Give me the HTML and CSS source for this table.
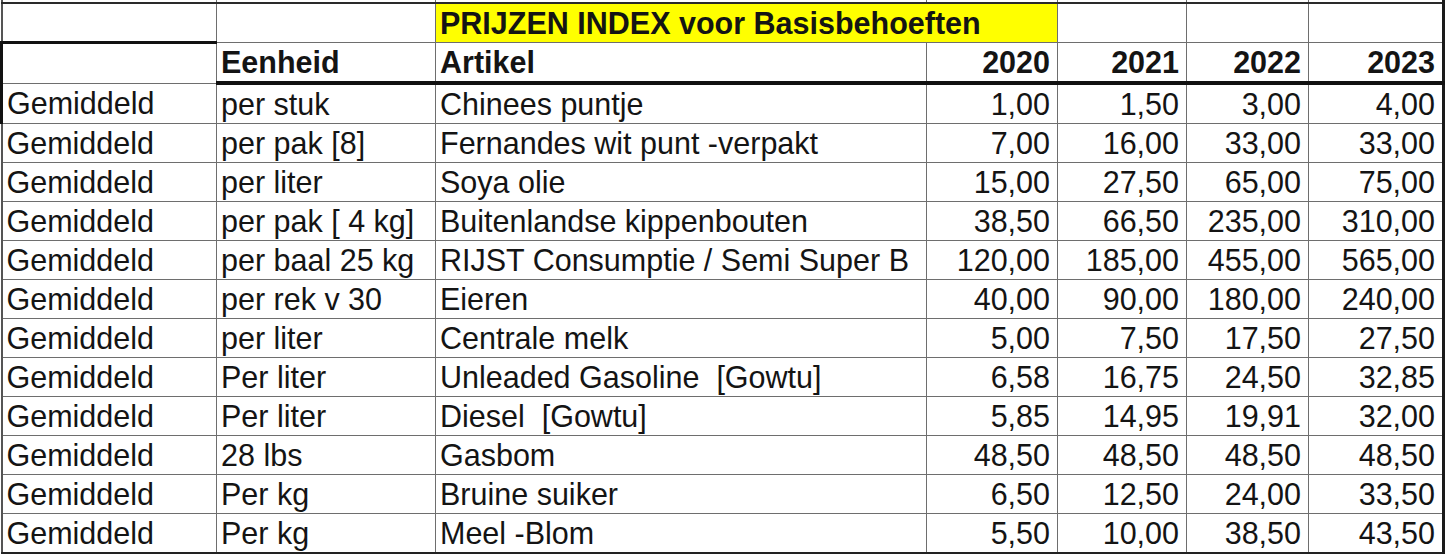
FILE: index.html
```html
<!DOCTYPE html>
<html lang="nl">
<head>
<meta charset="utf-8">
<title>PRIJZEN INDEX voor Basisbehoeften</title>
<link rel="stylesheet" href="styles.css">
</head>
<body>
<table class="sheet">
  <colgroup>
    <col class="c1"><col class="c2"><col class="c3"><col class="c4"><col class="c5"><col class="c6"><col class="c7">
  </colgroup>
  <tbody>
    <tr class="stub"><td></td><td></td><td></td><td></td><td></td><td></td><td></td></tr>
    <tr class="title">
      <td class="t1"></td>
      <td></td>
      <td colspan="2"><span class="mark">PRIJZEN INDEX voor Basisbehoeften</span></td>
      <td></td><td></td><td></td>
    </tr>
    <tr class="head">
      <td class="h1"></td>
      <td class="hb">Eenheid</td>
      <td class="hb">Artikel</td>
      <td class="hb num">2020</td>
      <td class="hb num">2021</td>
      <td class="hb num">2022</td>
      <td class="hb num">2023</td>
    </tr>
    <tr class="row first"><td class="g">Gemiddeld</td><td>per stuk</td><td>Chinees puntje</td><td class="num">1,00</td><td class="num">1,50</td><td class="num">3,00</td><td class="num">4,00</td></tr>
    <tr class="row"><td>Gemiddeld</td><td>per pak [8]</td><td>Fernandes wit punt -verpakt</td><td class="num">7,00</td><td class="num">16,00</td><td class="num">33,00</td><td class="num">33,00</td></tr>
    <tr class="row"><td>Gemiddeld</td><td>per liter</td><td>Soya olie</td><td class="num">15,00</td><td class="num">27,50</td><td class="num">65,00</td><td class="num">75,00</td></tr>
    <tr class="row"><td>Gemiddeld</td><td>per pak [ 4 kg]</td><td>Buitenlandse kippenbouten</td><td class="num">38,50</td><td class="num">66,50</td><td class="num">235,00</td><td class="num">310,00</td></tr>
    <tr class="row"><td>Gemiddeld</td><td>per baal 25 kg</td><td>RIJST Consumptie / Semi Super B</td><td class="num">120,00</td><td class="num">185,00</td><td class="num">455,00</td><td class="num">565,00</td></tr>
    <tr class="row"><td>Gemiddeld</td><td>per rek v 30</td><td>Eieren</td><td class="num">40,00</td><td class="num">90,00</td><td class="num">180,00</td><td class="num">240,00</td></tr>
    <tr class="row"><td>Gemiddeld</td><td>per liter</td><td>Centrale melk</td><td class="num">5,00</td><td class="num">7,50</td><td class="num">17,50</td><td class="num">27,50</td></tr>
    <tr class="row"><td>Gemiddeld</td><td>Per liter</td><td>Unleaded Gasoline&nbsp; [Gowtu]</td><td class="num">6,58</td><td class="num">16,75</td><td class="num">24,50</td><td class="num">32,85</td></tr>
    <tr class="row"><td>Gemiddeld</td><td>Per liter</td><td>Diesel&nbsp; [Gowtu]</td><td class="num">5,85</td><td class="num">14,95</td><td class="num">19,91</td><td class="num">32,00</td></tr>
    <tr class="row"><td>Gemiddeld</td><td>28 lbs</td><td>Gasbom</td><td class="num">48,50</td><td class="num">48,50</td><td class="num">48,50</td><td class="num">48,50</td></tr>
    <tr class="row"><td>Gemiddeld</td><td>Per kg</td><td>Bruine suiker</td><td class="num">6,50</td><td class="num">12,50</td><td class="num">24,00</td><td class="num">33,50</td></tr>
    <tr class="row last"><td>Gemiddeld</td><td>Per kg</td><td>Meel -Blom</td><td class="num">5,50</td><td class="num">10,00</td><td class="num">38,50</td><td class="num">43,50</td></tr>
  </tbody>
</table>
</body>
</html>
```

FILE: styles.css
```css
html, body {
  margin: 0;
  padding: 0;
  background: #ffffff;
}

.sheet {
  border-collapse: collapse;
  table-layout: fixed;
  width: 1442px;
  font-family: "Liberation Sans", Arial, sans-serif;
  font-size: 30.5px;
  color: #141414;
  border-right: 3px solid #1a1a1a;
  border-left: 2px solid #555555;
}

.c1 { width: 215px; }
.c2 { width: 219px; }
.c3 { width: 491px; }
.c4 { width: 131px; }
.c5 { width: 129px; }
.c6 { width: 122px; }
.c7 { width: 135px; }

.sheet td {
  border: 1.5px solid #6e6e6e;
  padding: 0 6px 0 4px;
  white-space: nowrap;
  overflow: visible;
  vertical-align: middle;
  line-height: 34px;
}

.sheet .num {
  text-align: right;
  padding-right: 7px;
}

.stub td {
  height: 2px;
  padding: 0;
  line-height: 0;
  border-top: 0;
  border-bottom: 2px solid #2a2a2a;
}

.title td {
  height: 37px;
}

.title td:nth-child(3) {
  background: #ffff00;
  font-weight: bold;
  padding-left: 4px;
  border-left: 1.5px solid #6e6e6e;
}

.title .t1 {
  border-bottom: 3px solid #111111;
}

.head td {
  height: 38px;
}

.head .hb {
  font-weight: bold;
  border-bottom: 4px solid #111111;
}

.head .h1 {
  border-left: 3px solid #111111;
}

.row td {
  height: 38px;
}

.row.first td:first-child {
  border-left: 3px solid #111111;
}

.row.last td {
  border-bottom: 2.5px solid #222222;
}
```
